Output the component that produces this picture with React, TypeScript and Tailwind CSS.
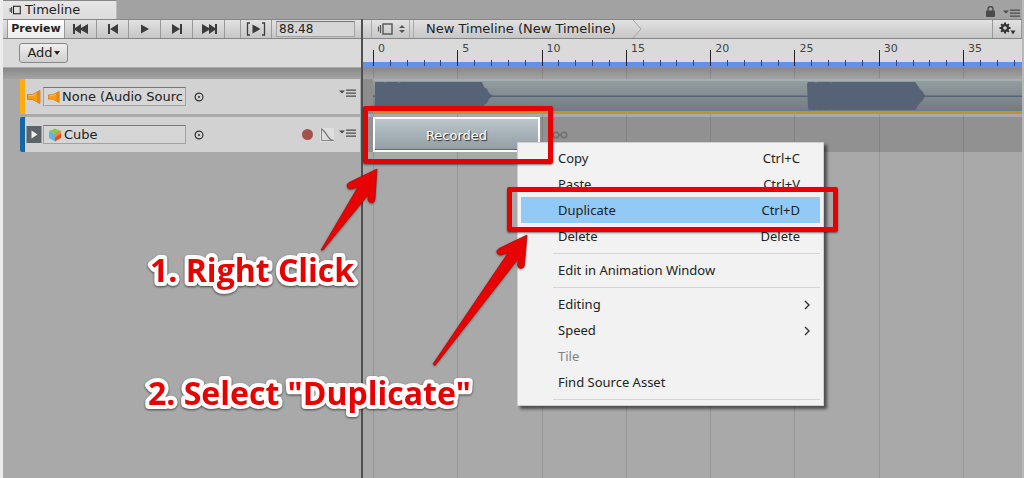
import React from "react";

const TICKS = Array.from({ length: 39 }, (_, i) => i);
const GRID = [0, 5, 10, 15, 20, 25, 30, 35];

function TimelineIcon({ className }: { className: string }) {
  return (
    <svg viewBox="0 0 16 12" className={className} fill="none" stroke="currentColor">
      <path d="M1.5 3.5v5M3.5 2v8" strokeWidth="1.2" />
      <rect x="6" y="1" width="9" height="10" strokeWidth="1.4" />
    </svg>
  );
}

function TransportIcon({ d, wide }: { d: string; wide?: boolean }) {
  return (
    <svg viewBox="0 0 18 12" className={wide ? "h-3 w-5" : "h-3 w-[18px]"} fill="#3c3c3c">
      <path d={d} />
    </svg>
  );
}

const TRANSPORT = [
  { label: "Go to start", d: "M1 1h2v4l6-4v4l7-4v10l-7-4v4l-6-4v4h-2z" },
  { label: "Previous frame", d: "M4 1h2v10h-2zM14 1v10l-8-5z" },
  { label: "Play", d: "M5 1.5v9l8-4.5z" },
  { label: "Next frame", d: "M12 1h2v10h-2zM4 1v10l8-5z" },
  { label: "Go to end", d: "M17 1h-2v4l-6-4v4l-7-4v10l7-4v4l6-4v4h2z" },
];

function SpeakerIcon({ className }: { className: string }) {
  return (
    <svg viewBox="0 0 14 14" className={className}>
      <path d="M0.5 4.5h5l7.5-4v13l-7.5-4h-5z" fill="#ff9c0c" stroke="#c9781c" strokeWidth="0.8" />
      <path d="M10 2.5l2.5-1.3v11.6l-2.5-1.3z" fill="#e9850d" />
      <path d="M1.5 5.5h4.5l3-1.7" stroke="#ffc25c" fill="none" />
    </svg>
  );
}

function CubeIcon() {
  return (
    <svg viewBox="0 0 14 14" className="h-3.5 w-3.5 shrink-0">
      <path d="M7 0.5l6 2.5-6 3-6-3z" fill="#8fc64a" />
      <path d="M1 3l6 3v7.5l-6-3.5z" fill="#62b5e0" />
      <path d="M13 3l-6 3v7.5l6-3.5z" fill="#e2502a" />
      <path d="M7 6l6-3v2.5l-6 4z" fill="#ef8a35" />
    </svg>
  );
}

function PickerIcon() {
  return (
    <svg viewBox="0 0 10 10" className="h-2.5 w-2.5" fill="none" stroke="#333">
      <circle cx="5" cy="5" r="3.9" strokeWidth="1.2" />
      <circle cx="5" cy="5" r="1" fill="#333" stroke="none" />
    </svg>
  );
}

function OptionsIcon() {
  return (
    <svg viewBox="0 0 17 8" className="h-2 w-[17px]">
      <path d="M0 1.5h6l-3 3z" fill="#4a4a4a" />
      <path d="M7 1.2h10M7 4.2h10M7 7.2h10" stroke="#4a4a4a" strokeWidth="1.3" />
    </svg>
  );
}

function GridLines() {
  return (
    <div className="pointer-events-none absolute inset-0 flex pl-2.5">
      {GRID.map((n) => (
        <div
          key={n}
          className={n === 35 ? "min-w-0 flex-[7] border-l border-black/10" : "min-w-0 flex-[10] border-l border-black/10"}
        />
      ))}
    </div>
  );
}

function ObjectField({ icon, label }: { icon: React.ReactNode; label: string }) {
  return (
    <button className="flex h-[19px] w-[143px] items-center gap-0.5 overflow-hidden border border-[#a2a2a2] border-t-[#777] bg-[#d6d6d6] pl-1 pr-0.5">
      {icon}
      <span className="min-w-0 flex-1 overflow-hidden whitespace-nowrap text-left text-[13px] leading-4 text-[#222]">
        {label}
      </span>
    </button>
  );
}

function TrackPanel() {
  return (
    <div className="flex w-[358px] shrink-0 flex-col">
      <div className="flex h-5 items-stretch border-y border-[#858585] bg-linear-to-b from-[#e2e2e2] to-[#c6c6c6]">
        <div className="w-[5px] border-r border-[#999]" />
        <button className="w-14 bg-linear-to-b from-white to-[#ececec] text-[11px] leading-4 font-semibold text-[#222]">
          Preview
        </button>
        {TRANSPORT.map((t, i) => (
          <button
            key={t.label}
            aria-label={t.label}
            className="flex w-8 items-center justify-center border-l border-[#999]"
          >
            <TransportIcon d={t.d} wide={i === 0 || i === 4} />
          </button>
        ))}
        <div className="w-4 border-l border-[#999]" />
        <button aria-label="Play range" className="flex w-8 items-center justify-center border-x border-[#999]">
          <svg viewBox="0 0 20 14" className="h-3.5 w-5">
            <path d="M4 1H1.5v12H4M16 1h2.5v12H16" fill="none" stroke="#3c3c3c" strokeWidth="1.3" />
            <path d="M6.5 2.5v9l8-4.5z" fill="#3c3c3c" />
          </svg>
        </button>
        <input
          aria-label="Current time"
          defaultValue="88.48"
          className="mx-1 my-px w-[79px] border border-[#a2a2a2] border-t-[#777] bg-[#d6d6d6] px-0.5 text-[12px] leading-4 text-[#222]"
        />
      </div>

      <div className="flex h-[29px] items-center border-b border-[#aaa] bg-[#dadada] pl-4">
        <button className="flex h-5 w-[49px] items-center justify-center gap-px rounded-[3px] border border-[#888] bg-linear-to-b from-[#f0f0f0] to-[#cfcfcf] text-[13px] leading-4 text-[#222]">
          Add
          <svg viewBox="0 0 6 4" className="h-1 w-1.5" fill="#222">
            <path d="M0 0h6l-3 4z" />
          </svg>
        </button>
      </div>
      <div className="h-[11px] bg-linear-to-b from-[#8a8a8a] to-[#a3a3a3]" />

      <div className="flex flex-col gap-[3px] pr-px pl-[17px]">
        <div className="flex h-[35px] items-center rounded-l-[2px] border-l-[5px] border-[#ffae0c] bg-[#d2d2d2] pr-1">
          <SpeakerIcon className="mx-0.5 h-4 w-3.5 shrink-0" />
          <ObjectField icon={<SpeakerIcon className="h-3 w-3 shrink-0" />} label="None (Audio Source)" />
          <button aria-label="Pick audio source" className="ml-2">
            <PickerIcon />
          </button>
          <button aria-label="Audio track options" className="ml-auto pb-2">
            <OptionsIcon />
          </button>
        </div>
        <div className="flex h-[35px] items-center rounded-l-[2px] border-l-[5px] border-[#1766a5] bg-[#d2d2d2] pr-1">
          <svg viewBox="0 0 15 17" className="mx-px h-[17px] w-4 shrink-0">
            <rect width="15" height="17" fill="#5c6468" />
            <path d="M5 4.5v8l6-4z" fill="#f0f0f0" />
          </svg>
          <ObjectField icon={<CubeIcon />} label="Cube" />
          <button aria-label="Pick object" className="ml-2">
            <PickerIcon />
          </button>
          <div className="ml-auto flex items-center gap-[5px]">
            <button aria-label="Record" className="mr-0.5 h-[11px] w-[11px] rounded-full bg-[#a5504e]" />
            <button aria-label="Show curves">
              <svg viewBox="0 0 14 14" className="h-3.5 w-3.5" fill="none" stroke="#888">
                <rect width="14" height="14" fill="#dedede" stroke="none" />
                <path d="M1.5 0v12.5H14" />
                <path d="M1.5 1.5C6 2 7.5 12 13 12.5" stroke="#777" strokeWidth="1.3" />
              </svg>
            </button>
            <button aria-label="Animation track options" className="pb-1">
              <OptionsIcon />
            </button>
          </div>
        </div>
      </div>
    </div>
  );
}

function Ruler() {
  return (
    <div className="flex h-[29px] bg-linear-to-b from-[#dadada] from-80% to-[#6691e2] to-80% pl-2.5">
      {TICKS.map((n) => (
        <div key={n} className={n === 38 ? "flex min-w-0 flex-1 items-end pb-0.5" : "flex min-w-0 flex-[2] items-end pb-0.5"}>
          {n % 5 === 0 ? (
            <div className="h-4 w-px shrink-0 bg-[#222]" />
          ) : (
            <div className="h-1.5 w-px shrink-0 bg-[#2f4570]" />
          )}
          {n % 5 === 0 && (
            <span className="self-start pt-1 pl-1 text-[11px] leading-3 whitespace-nowrap text-[#444]">{n}</span>
          )}
        </div>
      ))}
    </div>
  );
}

function ClipArea() {
  return (
    <div className="flex min-w-0 flex-1 flex-col">
      <div className="flex h-5 items-stretch border-y border-[#858585] bg-linear-to-b from-[#e2e2e2] to-[#c6c6c6] pl-0.5">
        <div className="w-[7px] border-r border-[#aaa]" />
        <button
          aria-label="Select timeline"
          className="flex w-[38px] items-center justify-center gap-1.5 border-r border-[#aaa] text-[#555]"
        >
          <TimelineIcon className="h-3 w-4" />
          <svg viewBox="0 0 6 8" className="h-2 w-1.5" fill="#555">
            <path d="M0 3l3-3 3 3zM0 5l3 3 3-3z" />
          </svg>
        </button>
        <div className="w-1 border-r border-[#aaa]" />
        <button className="pl-3 text-[13px] leading-4 whitespace-nowrap text-[#222]">New Timeline (New Timeline)</button>
        <svg viewBox="0 0 10 18" className="ml-4 h-[18px] w-2.5" fill="none" stroke="#a5a5a5">
          <path d="M1 0l8 9-8 9" />
        </svg>
        <button
          aria-label="Timeline settings"
          className="ml-auto flex w-[30px] items-center justify-center border-x border-[#999]"
        >
          <svg viewBox="0 0 17 14" className="h-3.5 w-[17px]">
            <g stroke="#333" strokeWidth="2">
              <path d="M6 0.5v11M0.5 6h11M2.1 2.1l7.8 7.8M9.9 2.1l-7.8 7.8" />
            </g>
            <circle cx="6" cy="6" r="4" fill="#333" />
            <circle cx="6" cy="6" r="1.8" fill="#d4d4d4" />
            <path d="M11.5 8.5h5l-2.5 4z" fill="#333" />
          </svg>
        </button>
      </div>

      <Ruler />

      <div className="relative flex flex-1 flex-col">
        <div className="h-[11px] bg-linear-to-b from-[#8a8a8a] to-[#a3a3a3]" />
        <div className="h-[35px] bg-[#8d8d8d]" />
        <div className="h-[3px]" />
        <div className="h-[35px] bg-[#919191]" />
        <GridLines />

        <div className="absolute inset-x-0 top-[11px] flex flex-col gap-[3px] pl-2.5">
          <div className="flex h-[35px] flex-col border-t-2 border-b-[3px] border-t-[#a4afb4] border-b-[#c5912a] bg-linear-to-b from-[#939d9f] to-[#727b81]">
            <svg viewBox="0 0 649 30" preserveAspectRatio="none" className="h-[30px] w-full" fill="#566377">
              <path d="M0 14.5h649v1.5H0z" />
              <path d="M2 1h8l2 .6 2-.6h10l2 .8 2-.8h81l2 5 3 2 2 4 4 3-4 3-2 4-3 2-2 5H2z" />
              <path d="M434 3l1-2h7l1 .8 1-.8h13l1 .8 1-.8h83l3 4 2 3 3 3 2 4-2 4-3 3-2 3-3 4h-84l-1-.8-1 .8h-12l-1-.8-1 .8h-6l-1-2z" />
            </svg>
          </div>
          <div className="flex h-[35px] items-center gap-3">
            <div className="flex h-[35px] w-[167px] items-center justify-center border-2 border-white bg-linear-to-b from-[#bcc7cc] to-[#929da4]">
              <span className="flex h-full w-full items-center justify-center border-b border-[#2f7f9c] pt-1 text-[13px] leading-4 text-white [text-shadow:1px_1px_1px_#222]">
                Recorded
              </span>
            </div>
            <svg viewBox="0 0 16 8" className="h-2 w-4" fill="none" stroke="#707070" strokeWidth="1.5">
              <circle cx="4" cy="4" r="2.8" />
              <circle cx="12" cy="4" r="2.8" />
              <path d="M6.5 4h3" />
            </svg>
          </div>
        </div>
      </div>
    </div>
  );
}

type Item = { label: string; shortcut?: string; active?: boolean; disabled?: boolean; submenu?: boolean };

const MENU: Item[][] = [
  [
    { label: "Copy", shortcut: "Ctrl+C" },
    { label: "Paste", shortcut: "Ctrl+V" },
    { label: "Duplicate", shortcut: "Ctrl+D", active: true },
    { label: "Delete", shortcut: "Delete" },
  ],
  [{ label: "Edit in Animation Window" }],
  [
    { label: "Editing", submenu: true },
    { label: "Speed", submenu: true },
    { label: "Tile", disabled: true },
    { label: "Find Source Asset" },
  ],
];

function ContextMenu() {
  return (
    <div
      role="menu"
      className="absolute top-[142px] left-[517px] w-[307px] border border-[#cfcfcf] bg-[#f2f2f2] px-[3px] py-0.5 font-['Noto_Sans','Open_Sans',sans-serif] text-[13px] text-[#222] shadow-[3px_3px_3px_rgba(0,0,0,0.55)]"
    >
      {MENU.map((group, i) => (
        <div key={i}>
          {group.map((item) => (
            <button
              key={item.label}
              role="menuitem"
              disabled={item.disabled}
              className={
                item.active
                  ? "flex h-[26px] w-full items-center justify-between bg-[#91c9f7] pt-0.5 pr-5 pl-[37px]"
                  : item.disabled
                    ? "flex h-[26px] w-full items-center justify-between pt-0.5 pr-5 pl-[37px] text-[#808080]"
                    : "flex h-[26px] w-full items-center justify-between pt-0.5 pr-5 pl-[37px]"
              }
            >
              <span>{item.label}</span>
              {item.shortcut && <span>{item.shortcut}</span>}
              {item.submenu && (
                <svg viewBox="0 0 6 10" className="-mr-2.5 h-2.5 w-1.5" fill="none" stroke="#333" strokeWidth="1.4">
                  <path d="M1 1l4 4-4 4" />
                </svg>
              )}
            </button>
          ))}
          <div className="flex h-2 items-center pl-8">
            <div className="h-px w-full bg-[#d5d5d5]" />
          </div>
        </div>
      ))}
    </div>
  );
}

function Arrow({ d, className, viewBox }: { d: string; className: string; viewBox: string }) {
  return (
    <svg viewBox={viewBox} className={className} aria-hidden="true">
      <path d={d} fill="#e80303" stroke="#a80808" strokeWidth="0.7" strokeLinejoin="round" />
    </svg>
  );
}

// svg text, so that the white outline gets round joins
function Caption({ className, children }: { className: string; children: string }) {
  return (
    <svg className={className}>
      <text
        x="5"
        y="34"
        fill="#e60000"
        stroke="#fff"
        strokeWidth="8"
        strokeLinejoin="round"
        className="font-['Open_Sans','Noto_Sans',sans-serif] text-[32px] font-bold [paint-order:stroke]"
      >
        {children}
      </text>
    </svg>
  );
}

function Annotations() {
  return (
    <div className="pointer-events-none absolute inset-0">
      <div className="absolute top-[106px] left-[363px] h-[58px] w-[190px] rounded-[2px] border-[5px] border-[#e60000] shadow-[0_1px_2px_rgba(0,0,0,0.5)]" />
      <div className="absolute top-[187px] left-[507px] h-[45px] w-[331px] rounded-[2px] border-[5px] border-[#e60000] shadow-[0_1px_2px_rgba(0,0,0,0.5)]" />
      <Arrow
        viewBox="0 0 66 92"
        className="absolute top-[164px] left-[316px] h-[92px] w-[66px] drop-shadow-[0_1px_1px_rgba(0,0,0,0.4)]"
        d="M61 5L33 18.5Q30 20.5 31.5 23.5Q33 25.5 36 25L42 23L5 86L7 86L52 31L52 36Q53 39 56 39Q59 38 59 35Z"
      />
      <Arrow
        viewBox="0 0 106 142"
        className="absolute top-[230px] left-[428px] h-[142px] w-[106px] drop-shadow-[0_1px_1px_rgba(0,0,0,0.4)]"
        d="M99 5L71 18.5Q68 20.5 69 23Q70.5 25.5 73 25L80 23L5 134L7 135.5L90 29L89.5 35Q90 38.5 93 38.5Q96 38 96.5 35Z"
      />
      <Caption className="absolute top-[248px] left-[145px] h-12 w-56 drop-shadow-[0_1px_1px_rgba(0,0,0,0.6)]">
        1. Right Click
      </Caption>
      <Caption className="absolute top-[371px] left-[143px] h-12 w-[340px] drop-shadow-[0_1px_1px_rgba(0,0,0,0.6)]">
        2. Select "Duplicate"
      </Caption>
    </div>
  );
}

export default function App() {
  return (
    <div className="relative overflow-hidden font-['DejaVu_Sans',sans-serif]">
      <div className="flex min-h-screen flex-col border-r-2 border-l-[3px] border-r-[#b8b8b8] border-l-[#ececec] bg-[#a9a9a9]">
        <header className="flex h-[19px] items-stretch bg-[#a2a2a2]">
          <button className="flex w-[114px] items-center gap-1 border-t border-r border-[#bbb] border-t-[#888] bg-linear-to-b from-[#e6e6e6] to-[#dcdcdc] pl-1.5 text-[13px] leading-4 text-[#222]">
            <TimelineIcon className="h-2.5 w-3" />
            Timeline
          </button>
          <div className="ml-auto flex items-end gap-2 pr-0.5 pb-0.5">
            <button aria-label="Lock">
              <svg viewBox="0 0 9 11" className="h-[11px] w-[9px]">
                <rect y="4.5" width="9" height="6.5" rx="1" fill="#4a4a4a" />
                <path d="M2 5V3a2.5 2.5 0 015 0v2" fill="none" stroke="#4a4a4a" strokeWidth="1.4" />
              </svg>
            </button>
            <button aria-label="Window options">
              <OptionsIcon />
            </button>
          </div>
        </header>

        <main className="flex flex-1">
          <TrackPanel />
          <div className="w-0.5 shrink-0 bg-[#505050]" />
          <ClipArea />
        </main>
      </div>

      <ContextMenu />
      <Annotations />
    </div>
  );
}
